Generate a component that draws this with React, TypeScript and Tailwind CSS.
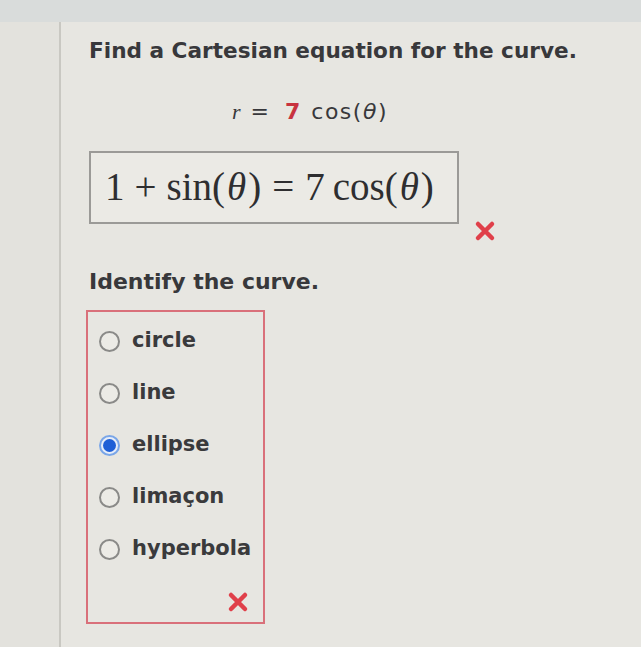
import React from "react";

function RedX({ size = 22 }: { size?: number }) {
  return (
    <svg width={size} height={size} viewBox="0 0 22 22">
      <path d="M4 4 L18 18 M18 4 L4 18" stroke="#e0404a" strokeWidth="4.5" strokeLinecap="round" />
    </svg>
  );
}

function Radio({ checked }: { checked?: boolean }) {
  if (checked) {
    return (
      <div className="w-[21px] h-[21px] rounded-full border-2 border-[#7aa6e8] bg-[#e8eef8] flex items-center justify-center">
        <div className="w-[13px] h-[13px] rounded-full bg-[#1f5fd6]" />
      </div>
    );
  }
  return <div className="w-[21px] h-[21px] rounded-full border-2 border-[#8a8a88] bg-[#ecebe6]" />;
}

export default function App() {
  const options = ["circle", "line", "ellipse", "limaçon", "hyperbola"];
  return (
    <div className="w-[641px] h-[647px] bg-[#e7e6e1] overflow-hidden flex flex-col" style={{ fontFamily: '"DejaVu Sans", Verdana, sans-serif' }}>
      <div className="h-[22px] bg-[#d9dcdb] shrink-0" />
      <div className="flex flex-1">
        <div className="w-[61px] bg-[#e3e2dd] border-r-2 border-[#c9c8c2] shrink-0" />
        <div className="flex flex-col pl-[28px] pt-[15px] text-[#38383b]">
          <div className="text-[21.6px] leading-[28px] font-bold">Find a Cartesian equation for the curve.</div>
          <div className="ml-[143px] mt-[34px] text-[22px] leading-[26px] flex items-baseline">
            <span className="italic mr-[10px]" style={{ fontFamily: '"Liberation Serif", serif' }}>r</span>
            <span className="mr-[16px]">=</span>
            <span className="text-[#c8333f] font-bold mr-[11px]">7</span>
            <span className="tracking-[1.5px]">cos(<span className="italic">θ</span>)</span>
          </div>
          <div className="flex items-end mt-[26px]">
            <div className="w-[370px] h-[73px] border-2 border-[#9b9a97] bg-[#ebeae5] flex items-center pl-[14px]" style={{ fontFamily: '"Liberation Serif", "Times New Roman", serif' }}>
              <span className="text-[39px] text-[#2e2e30] flex items-center whitespace-nowrap">
                <span>1</span>
                <span className="mx-[10px]">+</span>
                <span>sin</span>
                <span>(<span className="italic mx-[2px]">θ</span>)</span>
                <span className="mx-[11px]">=</span>
                <span>7</span>
                <span className="ml-[8px]">cos</span>
                <span>(<span className="italic mx-[2px]">θ</span>)</span>
              </span>
            </div>
            <div className="ml-[15px] mb-[-18px]">
              <RedX />
            </div>
          </div>
          <div className="mt-[45px] text-[22px] leading-[26px] font-bold">Identify the curve.</div>
          <div className="mt-[15px] ml-[-3px] w-[179px] h-[314px] border-2 border-[#d9707a] flex flex-col pl-[11px] pt-[3px]">
            {options.map((o, i) => (
              <div key={o} className="flex items-center h-[52px] gap-[12px]">
                <Radio checked={i === 2} />
                <span className="text-[21px] font-bold text-[#3a3a3c]">{o}</span>
              </div>
            ))}
            <div className="flex justify-end pr-[14px] mt-[16px]">
              <RedX />
            </div>
          </div>
        </div>
      </div>
    </div>
  );
}
